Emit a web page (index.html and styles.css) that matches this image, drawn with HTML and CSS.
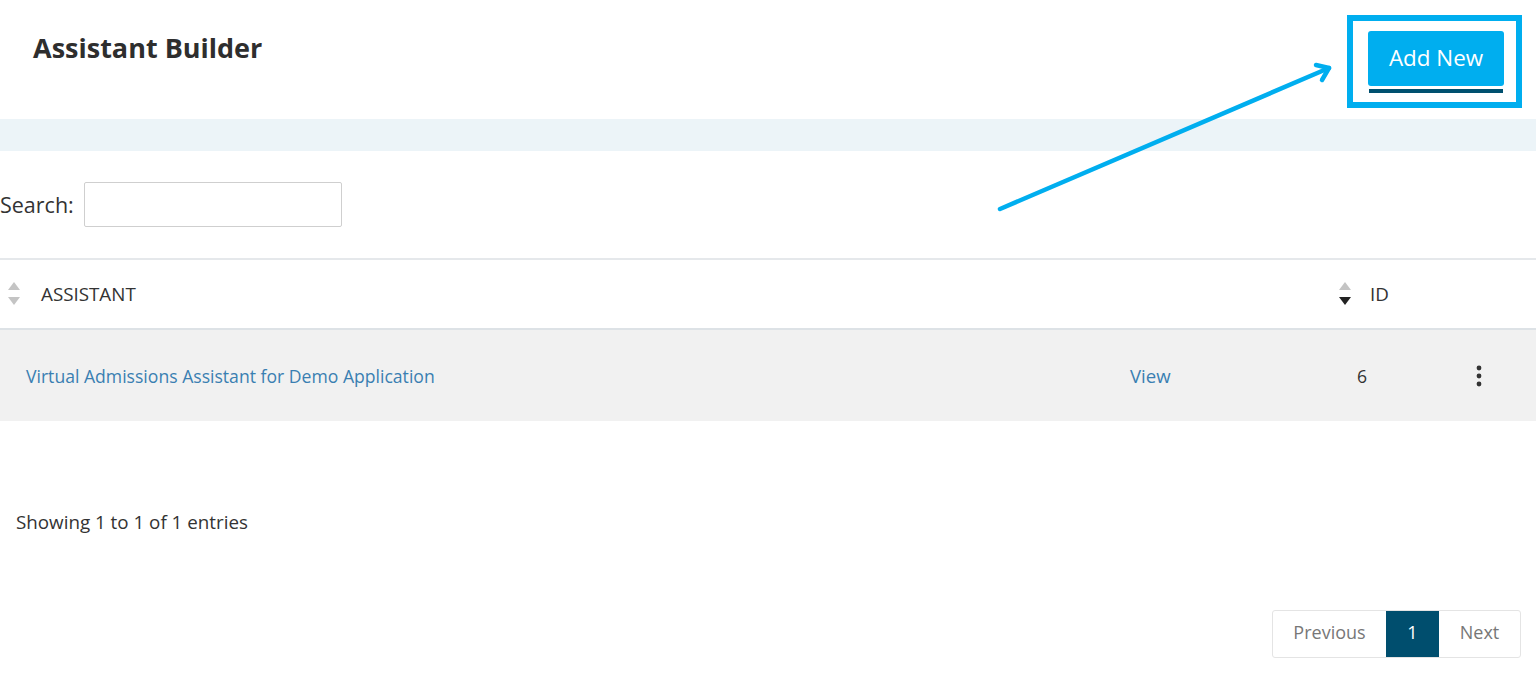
FILE: index.html
```html
<!DOCTYPE html>
<html>
<head>
<meta charset="utf-8">
<link rel="stylesheet" href="styles.css">
</head>
<body>
<div class="page">
  <header class="header">
    <h1 class="title">Assistant Builder</h1>
    <div class="highlight">
      <div class="btn-wrap">
        <button class="add-btn">Add New</button>
        <div class="btn-underline"></div>
      </div>
    </div>
  </header>
  <div class="band"></div>
  <div class="search-row">
    <label class="search-label">Search:</label>
    <input class="search-input" type="text">
  </div>
  <table class="grid">
    <colgroup>
      <col class="c1"><col class="c2"><col class="c3"><col class="c4">
    </colgroup>
    <thead>
      <tr>
        <th><span class="th-inner"><svg class="sort" width="12" height="24" viewBox="0 0 12 24"><path d="M0 8 L6 0 L12 8 Z" fill="#c4c4c4"/><path d="M0 15 L6 23 L12 15 Z" fill="#c4c4c4"/></svg><span class="th-label">ASSISTANT</span></span></th>
        <th></th>
        <th><span class="th-inner id"><svg class="sort" width="12" height="24" viewBox="0 0 12 24"><path d="M0 8 L6 0 L12 8 Z" fill="#c4c4c4"/><path d="M0 15 L6 23 L12 15 Z" fill="#222"/></svg><span class="th-label">ID</span></span></th>
        <th></th>
      </tr>
    </thead>
    <tbody>
      <tr>
        <td><a class="link" href="#">Virtual Admissions Assistant for Demo Application</a></td>
        <td><a class="link view" href="#">View</a></td>
        <td class="num">6</td>
        <td class="menu"><svg class="kebab" width="6" height="22" viewBox="0 0 6 22"><circle cx="3" cy="3" r="2.4" fill="#333"/><circle cx="3" cy="11" r="2.4" fill="#333"/><circle cx="3" cy="19" r="2.4" fill="#333"/></svg></td>
      </tr>
    </tbody>
  </table>
  <div class="info">Showing 1 to 1 of 1 entries</div>
  <div class="pager-row">
    <nav class="pager">
      <a class="pg" href="#">Previous</a>
      <a class="pg active" href="#">1</a>
      <a class="pg" href="#">Next</a>
    </nav>
  </div>
  <svg class="arrow" width="1536" height="685" viewBox="0 0 1536 685">
    <path d="M1000 209 L1329 68" stroke="#00aeef" stroke-width="4.5" stroke-linecap="round" fill="none"/>
    <path d="M1316 65 L1329 68 L1322 80" stroke="#00aeef" stroke-width="4.5" stroke-linecap="round" stroke-linejoin="round" fill="none"/>
  </svg>
</div>
</body>
</html>
```
FILE: styles.css
```css
html, body {
  margin: 0;
  padding: 0;
  background: #fff;
}
body {
  font-family: "Open Sans", Lato, sans-serif;
  color: #333;
}
.page {
  position: relative;
  width: 1536px;
  height: 685px;
  overflow: hidden;
}
.header {
  height: 119px;
  display: flex;
  justify-content: space-between;
  align-items: flex-start;
}
.title {
  margin: 0;
  padding: 31px 0 0 33px;
  font-size: 27px;
  font-weight: 700;
  color: #2e2e2e;
  line-height: 34px;
}
.highlight {
  margin: 15px 14px 0 0;
  border: 6px solid #00aeef;
  padding: 10px 12px 9px 15px;
}
.btn-wrap {
  display: flex;
  flex-direction: column;
  gap: 3px;
}
.add-btn {
  width: 136px;
  height: 55px;
  border: none;
  border-radius: 3px;
  background: #00aeef;
  color: #fff;
  font-family: "Open Sans", Lato, sans-serif;
  font-size: 22.4px;
  padding: 0 0 3px 0;
}
.btn-underline {
  height: 4px;
  margin: 0 1px 0 1px;
  background: #00506f;
}
.band {
  height: 32px;
  background: #ecf4f8;
}
.search-row {
  height: 107px;
  display: flex;
  align-items: center;
  gap: 10px;
}
.search-label {
  font-size: 21.5px;
  color: #333;
}
.search-input {
  width: 256px;
  height: 43px;
  border: 1px solid #cfcfcf;
  border-radius: 2px;
  padding: 0;
  margin: 0;
  box-sizing: content-box;
}
.grid {
  width: 1536px;
  border-collapse: collapse;
  table-layout: fixed;
}
.c1 { width: 1104px; }
.c2 { width: 227px; }
.c3 { width: 122px; }
.c4 { width: 83px; }
.grid thead tr {
  height: 70px;
  border-top: 2px solid #e5e8eb;
  border-bottom: 2px solid #dde2e6;
}
.grid th {
  padding: 0 0 0 8px;
  text-align: left;
  font-weight: 400;
  font-size: 18.8px;
  color: #333;
}
.th-inner {
  display: flex;
  align-items: center;
  gap: 21px;
}
.th-inner.id {
  gap: 19px;
}
.sort {
  display: block;
}
.grid tbody tr {
  height: 92px;
  background: #f1f1f1;
}
.grid td {
  padding: 0 0 0 26px;
  font-size: 17.6px;
}
.grid td.menu {
  padding-left: 23px;
}
.link {
  color: #3a7fb2;
  text-decoration: none;
}
.link.view {
  font-size: 18.6px;
}
.num {
  color: #333;
}
.kebab {
  display: block;
}
.info {
  padding: 89px 0 0 16px;
  font-size: 18.8px;
  line-height: 24px;
  color: #333;
}
.pager-row {
  display: flex;
  justify-content: flex-end;
  padding: 76px 15px 0 0;
}
.pager {
  display: flex;
  border: 1px solid #e4e4e4;
  border-radius: 3px;
  height: 46px;
}
.pg {
  display: flex;
  align-items: center;
  justify-content: center;
  font-size: 18px;
  color: #777;
  text-decoration: none;
  padding-bottom: 4px;
  box-sizing: border-box;
}
.pg:first-child { width: 113px; }
.pg.active { width: 53px; background: #004e6e; color: #fff; }
.pg:last-child { width: 81px; }
.arrow {
  position: absolute;
  left: 0;
  top: 0;
  pointer-events: none;
}
```
